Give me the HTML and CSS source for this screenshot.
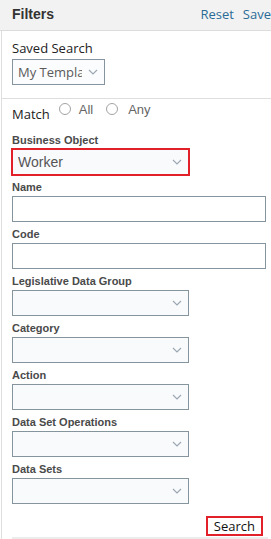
FILE: index.html
```html
<!DOCTYPE html>
<html>
<head>
<meta charset="utf-8">
<link rel="stylesheet" href="styles.css">
</head>
<body>
<div class="panel">
  <header class="hdr">
    <span class="title">Filters</span>
    <span class="links"><a class="link">Reset</a><a class="link">Save</a></span>
  </header>
  <div class="content">
    <section class="saved">
      <div class="saved-label">Saved Search</div>
      <div class="sel sel-small">
        <span class="sel-text tpl">My Template</span>
        <svg class="chev" width="10" height="6" viewBox="0 0 10 6"><path d="M1 1 L5 5 L9 1" fill="none" stroke="#9aa6b0" stroke-width="1.1"/></svg>
      </div>
    </section>
    <div class="form">
      <div class="match-row">
        <span class="match">Match</span>
        <span class="radio r1"></span><span class="ropt o1">All</span>
        <span class="radio r2"></span><span class="ropt o2">Any</span>
      </div>
      <div class="field">
        <div class="lbl">Business Object</div>
        <div class="sel sel-mid hl">
          <span class="sel-text worker">Worker</span>
          <svg class="chev" width="10" height="6" viewBox="0 0 10 6"><path d="M1 1 L5 5 L9 1" fill="none" stroke="#9aa6b0" stroke-width="1.1"/></svg>
        </div>
      </div>
      <div class="field">
        <div class="lbl">Name</div>
        <div class="inp"></div>
      </div>
      <div class="field">
        <div class="lbl">Code</div>
        <div class="inp"></div>
      </div>
      <div class="field">
        <div class="lbl">Legislative Data Group</div>
        <div class="sel sel-mid"><span class="sel-text"></span><svg class="chev" width="10" height="6" viewBox="0 0 10 6"><path d="M1 1 L5 5 L9 1" fill="none" stroke="#9aa6b0" stroke-width="1.1"/></svg></div>
      </div>
      <div class="field">
        <div class="lbl">Category</div>
        <div class="sel sel-mid"><span class="sel-text"></span><svg class="chev" width="10" height="6" viewBox="0 0 10 6"><path d="M1 1 L5 5 L9 1" fill="none" stroke="#9aa6b0" stroke-width="1.1"/></svg></div>
      </div>
      <div class="field">
        <div class="lbl">Action</div>
        <div class="sel sel-mid"><span class="sel-text"></span><svg class="chev" width="10" height="6" viewBox="0 0 10 6"><path d="M1 1 L5 5 L9 1" fill="none" stroke="#9aa6b0" stroke-width="1.1"/></svg></div>
      </div>
      <div class="field">
        <div class="lbl">Data Set Operations</div>
        <div class="sel sel-mid"><span class="sel-text"></span><svg class="chev" width="10" height="6" viewBox="0 0 10 6"><path d="M1 1 L5 5 L9 1" fill="none" stroke="#9aa6b0" stroke-width="1.1"/></svg></div>
      </div>
      <div class="field">
        <div class="lbl">Data Sets</div>
        <div class="sel sel-mid"><span class="sel-text"></span><svg class="chev" width="10" height="6" viewBox="0 0 10 6"><path d="M1 1 L5 5 L9 1" fill="none" stroke="#9aa6b0" stroke-width="1.1"/></svg></div>
      </div>
      <div class="actions"><span class="btn">Search</span></div>
      <div class="bottom-bar"></div>
    </div>
  </div>
</div>
</body>
</html>
```
FILE: styles.css
```css
html, body {
  margin: 0;
  padding: 0;
  background: #fff;
}
body {
  width: 271px;
  height: 539px;
  overflow: hidden;
}
.panel {
  width: 271px;
  height: 539px;
  overflow: hidden;
  display: flex;
  flex-direction: column;
}
.hdr {
  flex: 0 0 auto;
  height: 30px;
  background: #f2f2f2;
  border-bottom: 1px solid #dcdcdc;
  display: flex;
  align-items: center;
  padding-left: 12px;
}
.title {
  flex: 1;
  font: bold 14px "Liberation Sans", Arial, sans-serif;
  color: #333;
  padding-bottom: 2px;
}
.links {
  display: flex;
  gap: 9px;
  flex-shrink: 0;
  white-space: nowrap;
  font: 13px "Open Sans", sans-serif;
  color: #2a6b96;
  padding-bottom: 3px;
}
.content {
  flex: 1;
  margin-left: 1px;
  border-left: 1px solid #dedede;
  display: flex;
  flex-direction: column;
}
.saved {
  padding: 8px 0 13px 10px;
  border-bottom: 1px solid #dedede;
}
.saved-label {
  font: 13px/18px "Open Sans", sans-serif;
  color: #222;
  margin-bottom: 2px;
}
.sel {
  box-sizing: border-box;
  height: 26px;
  border: 1px solid #86949e;
  background: #f9fafc;
  display: flex;
  align-items: center;
  padding: 0 6px 0 5px;
}
.sel-small {
  width: 93px;
  background: #fbfcfd;
}
.sel-mid {
  width: 177px;
}
.sel-text {
  flex: 1;
  overflow: hidden;
  white-space: nowrap;
}
.tpl {
  font: 13px "Open Sans", sans-serif;
  color: #5a5a5a;
  margin-right: 6px;
  padding-bottom: 1px;
}
.worker {
  font: 14px "Liberation Sans", Arial, sans-serif;
  color: #555;
}
.chev {
  flex-shrink: 0;
  display: block;
}
.hl {
  outline: 2px solid #e2202a;
  outline-offset: -1px;
}
.form {
  display: flex;
  flex-direction: column;
  gap: 6px;
  padding-left: 10px;
}
.match-row {
  height: 29px;
  display: flex;
  align-items: flex-start;
}
.match {
  font: 13px/18px "Open Sans", sans-serif;
  color: #222;
  margin-top: 6px;
  margin-right: 9px;
}
.radio {
  box-sizing: border-box;
  width: 12px;
  height: 12px;
  border: 1px solid #a3a3a3;
  border-radius: 50%;
  background: #fff;
  margin-top: 4px;
}
.ropt {
  font: 13px/15px "Liberation Sans", Arial, sans-serif;
  color: #666;
  margin-top: 3px;
}
.o1 { margin-left: 8px; margin-right: 13px; }
.o2 { margin-left: 10px; }
.field {
  display: flex;
  flex-direction: column;
}
.lbl {
  font: bold 11px/13px "Liberation Sans", Arial, sans-serif;
  color: #4a4a4a;
  margin-bottom: 2px;
}
.inp {
  box-sizing: border-box;
  width: 254px;
  height: 26px;
  border: 1px solid #86949e;
  background: #fff;
}
.actions {
  display: flex;
  justify-content: flex-end;
  padding-right: 8px;
  margin-top: 6px;
}
.btn {
  box-sizing: border-box;
  height: 20px;
  border: 2px solid #e2202a;
  padding: 0 6px;
  font: 13px/16px "Open Sans", sans-serif;
  color: #111;
}
.bottom-bar {
  width: 256px;
  height: 4px;
  background: #ececec;
  margin-top: -5px;
}
```
